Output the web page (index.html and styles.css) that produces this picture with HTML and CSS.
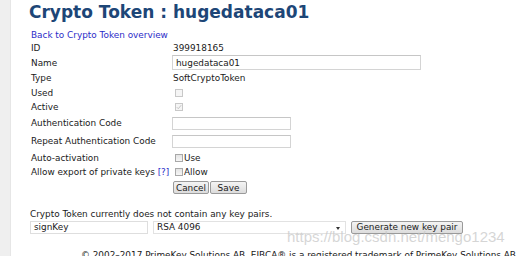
FILE: index.html
```html
<!DOCTYPE html>
<html>
<head>
<meta charset="utf-8">
<link rel="stylesheet" href="styles.css">
</head>
<body>
<div class="page">
  <div class="strip"></div>
  <div class="main">
    <h1 class="title">Crypto Token : hugedataca01</h1>
    <div class="form">
      <div class="row r-link"><a class="link" href="#">Back to Crypto Token overview</a></div>
      <div class="row r-id"><span class="label">ID</span><span class="value">399918165</span></div>
      <div class="row r-name"><span class="label">Name</span><span class="input wide">hugedataca01</span></div>
      <div class="row r-type"><span class="label">Type</span><span class="value">SoftCryptoToken</span></div>
      <div class="row r-used"><span class="label">Used</span><span class="cb disabled"></span></div>
      <div class="row r-active"><span class="label">Active</span><span class="cb disabled"><svg viewBox="0 0 8 8" width="8" height="8"><path d="M1.8 4.2 L3.3 5.7 L6.2 2.2" fill="none" stroke="#c4c4c4" stroke-width="1"/></svg></span></div>
      <div class="row r-auth"><span class="label">Authentication Code</span><span class="input pw"></span></div>
      <div class="row r-repeat"><span class="label">Repeat Authentication Code</span><span class="input pw"></span></div>
      <div class="row r-auto"><span class="label">Auto-activation</span><span class="cb"></span><span class="cbtext">Use</span></div>
      <div class="row r-allow"><span class="label">Allow export of private keys <a class="help" href="#">[?]</a></span><span class="cb"></span><span class="cbtext">Allow</span></div>
      <div class="row r-buttons"><span class="label"></span><span class="btn cancel">Cancel</span><span class="btn save">Save</span></div>
    </div>
    <p class="message">Crypto Token currently does not contain any key pairs.</p>
    <div class="keyrow">
      <span class="input alias">signKey</span>
      <span class="select">RSA 4096<span class="arrow"></span></span>
      <span class="btn generate">Generate new key pair</span>
    </div>
    <div class="footer">© 2002–2017 PrimeKey Solutions AB. EJBCA® is a registered trademark of PrimeKey Solutions AB.</div>
  </div>
</div>
<div class="watermark">https://blog.csdn.net/mengo1234</div>
</body>
</html>
```
FILE: styles.css
```css
html, body {
  margin: 0;
  padding: 0;
  background: #ffffff;
  overflow: hidden;
}
body {
  width: 531px;
  height: 256px;
  position: relative;
  font-family: "DejaVu Sans", Verdana, sans-serif;
  font-size: 8.9px;
  color: #1a1a1a;
}
.page {
  display: flex;
  height: 256px;
}
.strip {
  width: 10px;
  flex: none;
  background: #efefef;
  border-right: 1px solid #e6e6e6;
}
.main {
  flex: 1;
  padding-left: 18px;
  min-width: 0;
}
.title {
  margin: 0;
  height: 26px;
  line-height: 25px;
  font-size: 17px;
  font-weight: bold;
  color: #1d4677;
  white-space: nowrap;
}
.form {
  margin-top: 2px;
  padding-left: 2px;
}
.row {
  display: flex;
  align-items: center;
  white-space: nowrap;
}
.r-link { height: 13px; }
.r-id { height: 13px; }
.r-name { height: 17px; }
.r-type { height: 14px; }
.r-used { height: 15px; }
.r-active { height: 14px; }
.r-auth { height: 18px; }
.r-repeat { height: 18px; }
.r-auto { height: 15px; }
.r-allow { height: 13px; }
.r-buttons { height: 18px; align-items: flex-end; padding-bottom: 2px; box-sizing: border-box; }
.link, .help {
  color: #2b2bc8;
  text-decoration: none;
}
.label {
  width: 142px;
  flex: none;
  color: #1a1a1a;
}
.value {
  color: #1a1a1a;
}
.input {
  box-sizing: border-box;
  display: inline-flex;
  align-items: center;
  background: #ffffff;
  border: 1px solid #d4d4d4;
  border-top-color: #c6c6c6;
  padding-left: 3px;
  color: #1a1a1a;
}
.wide {
  width: 249px;
  height: 15px;
  margin-left: -1px;
}
.pw {
  width: 119px;
  height: 13px;
  margin-left: -1px;
}
.cb {
  box-sizing: border-box;
  display: inline-block;
  width: 8px;
  height: 8px;
  margin-left: 2px;
  border: 1px solid #a8a8a8;
  background: linear-gradient(#e4e4e4, #f6f6f6);
  position: relative;
}
.cb.disabled {
  border-color: #c8c8c8;
  background: #f5f5f5;
}
.cb svg {
  position: absolute;
  left: -1px;
  top: -1px;
}
.cbtext {
  margin-left: 1px;
  color: #1a1a1a;
}
.btn {
  box-sizing: border-box;
  display: inline-flex;
  align-items: center;
  justify-content: center;
  height: 13px;
  border: 1px solid #9a9a9a;
  border-radius: 2px;
  background: linear-gradient(#f4f4f4, #dcdcdc);
  color: #1a1a1a;
  font-size: 8.9px;
}
.cancel {
  width: 36px;
}
.save {
  width: 37px;
  margin-left: 1px;
}
.message {
  margin: 12px 0 0 0;
  height: 12px;
  line-height: 12px;
  padding-left: 1px;
}
.keyrow {
  display: flex;
  align-items: center;
  height: 14px;
  margin-top: 0;
  padding-left: 1px;
}
.alias {
  width: 118px;
  height: 13px;
  border-color: #dedede;
}
.select {
  box-sizing: border-box;
  position: relative;
  display: inline-flex;
  align-items: center;
  width: 193px;
  height: 13px;
  margin-left: 5px;
  padding-left: 3px;
  border: 1px solid #e2e2e2;
  background: #ffffff;
}
.arrow {
  position: absolute;
  right: 5px;
  top: 5px;
  width: 0;
  height: 0;
  border-left: 2px solid transparent;
  border-right: 2px solid transparent;
  border-top: 3px solid #333333;
}
.generate {
  width: 112px;
  margin-left: 5px;
}
.footer {
  margin-top: 15px;
  padding-left: 52px;
  white-space: nowrap;
  color: #1a1a1a;
  line-height: 12px;
}
.watermark {
  position: absolute;
  left: 287px;
  top: 228px;
  font-family: "Liberation Sans", Arial, sans-serif;
  font-size: 15px;
  color: rgba(200, 200, 200, 0.75);
  white-space: nowrap;
  pointer-events: none;
}
```
